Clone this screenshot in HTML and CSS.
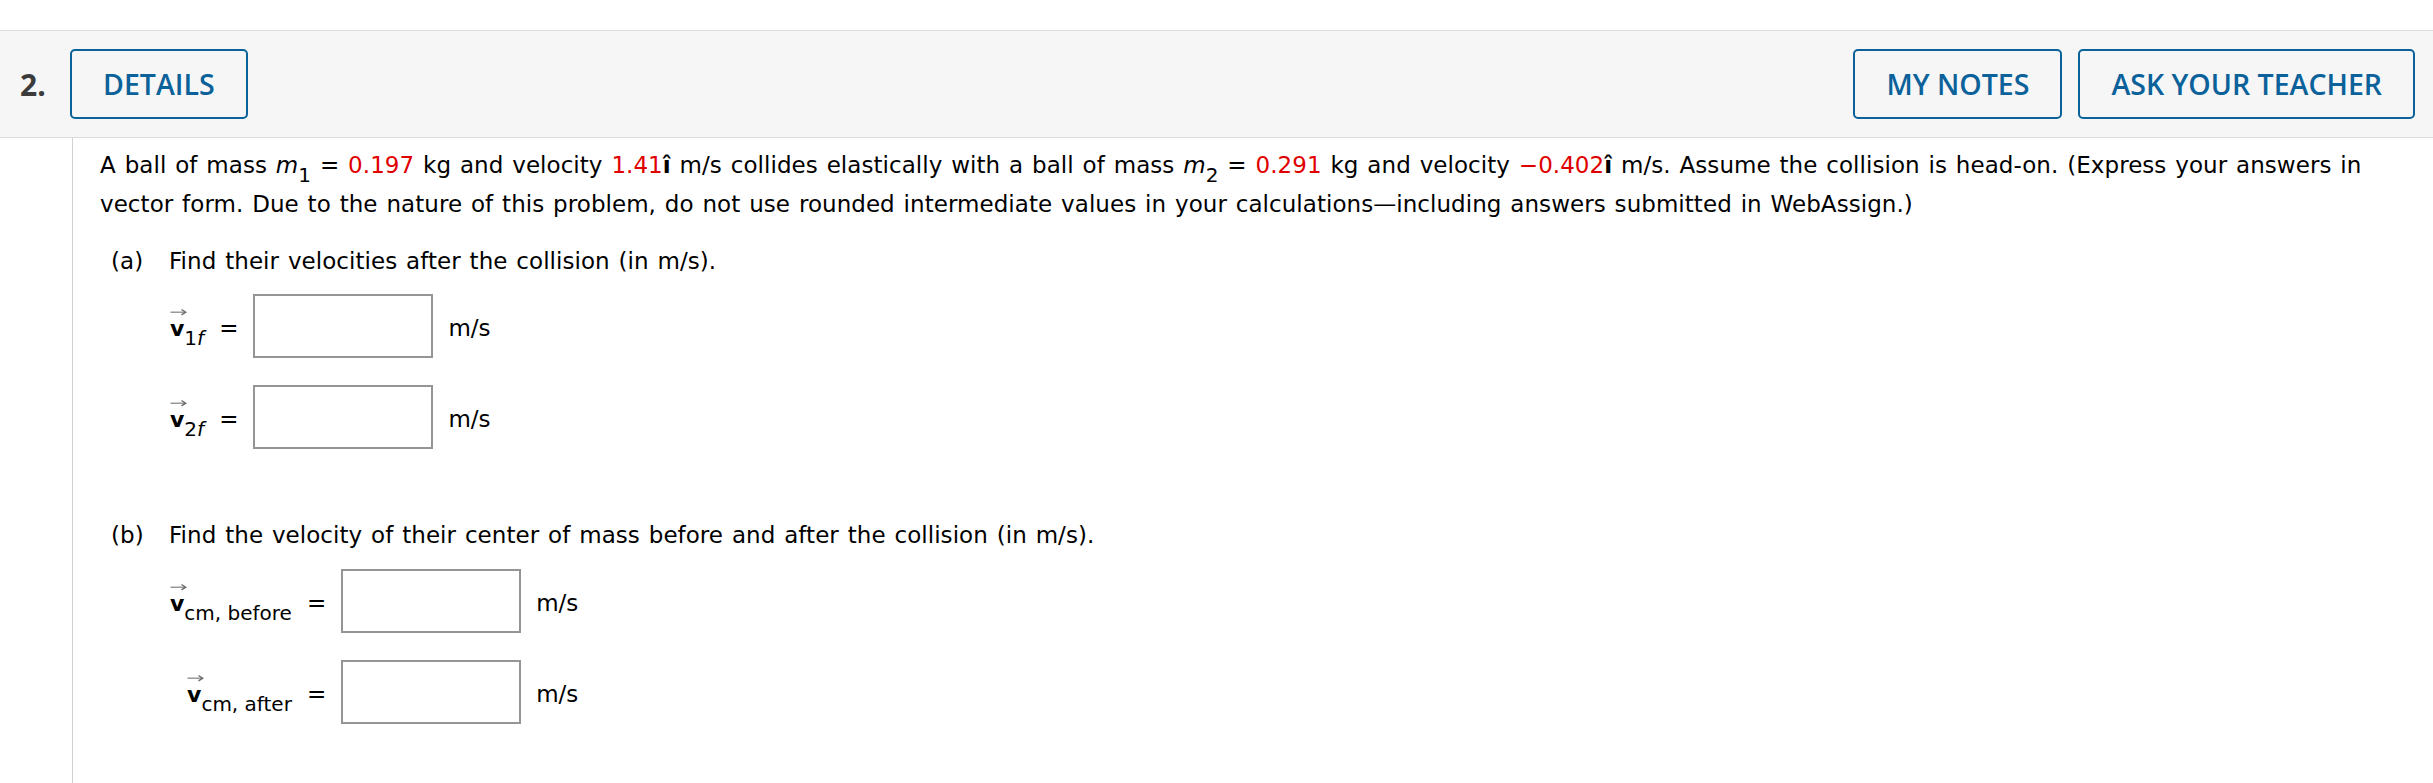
FILE: index.html
```html
<!DOCTYPE html>
<html lang="en">
<head>
<meta charset="utf-8">
<title>Question 2</title>
<link rel="stylesheet" href="styles.css">
</head>
<body>
<div class="question">
  <div class="qhead">
    <span class="qnum">2.</span>
    <button class="btn" type="button">DETAILS</button>
    <button class="btn btn-notes" type="button">MY NOTES</button>
    <button class="btn btn-ask" type="button">ASK YOUR TEACHER</button>
  </div>
  <div class="qbody">
    <p class="stem">A ball of mass <i>m</i><span class="sub">1</span> = <span class="red">0.197</span> kg and velocity <span class="red">1.41</span><b>î</b> m/s collides elastically with a ball of mass <i>m</i><span class="sub">2</span> = <span class="red">0.291</span> kg and velocity <span class="red">−0.402</span><b>î</b> m/s. Assume the collision is head-on. (Express your answers in vector form. Due to the nature of this problem, do not use rounded intermediate values in your calculations—including answers submitted in WebAssign.)</p>

    <div class="part">
      <div class="part-head"><span class="plabel">(a)</span><span>Find their velocities after the collision (in m/s).</span></div>
      <div class="answers">
        <span class="cell lbl"><span class="vec">v<svg class="arr" viewBox="0 0 17 8"><path d="M0.5 4.2H15" stroke="#8a8a8a" stroke-width="1.3" fill="none"/><path d="M11.5 1.5L15.8 4.2L11.5 6.9" stroke="#6a6a6a" stroke-width="1.4" fill="none"/></svg></span><span class="sub">1<i>f</i></span></span>
        <span class="cell eq">=</span>
        <input class="ans" type="text" aria-label="v1f">
        <span class="cell unit">m/s</span>

        <span class="cell lbl"><span class="vec">v<svg class="arr" viewBox="0 0 17 8"><path d="M0.5 4.2H15" stroke="#8a8a8a" stroke-width="1.3" fill="none"/><path d="M11.5 1.5L15.8 4.2L11.5 6.9" stroke="#6a6a6a" stroke-width="1.4" fill="none"/></svg></span><span class="sub">2<i>f</i></span></span>
        <span class="cell eq">=</span>
        <input class="ans" type="text" aria-label="v2f">
        <span class="cell unit">m/s</span>
      </div>
    </div>

    <div class="part">
      <div class="part-head"><span class="plabel">(b)</span><span>Find the velocity of their center of mass before and after the collision (in m/s).</span></div>
      <div class="answers">
        <span class="cell lbl"><span class="vec">v<svg class="arr" viewBox="0 0 17 8"><path d="M0.5 4.2H15" stroke="#8a8a8a" stroke-width="1.3" fill="none"/><path d="M11.5 1.5L15.8 4.2L11.5 6.9" stroke="#6a6a6a" stroke-width="1.4" fill="none"/></svg></span><span class="sub">cm, before</span></span>
        <span class="cell eq">=</span>
        <input class="ans" type="text" aria-label="vcm before">
        <span class="cell unit">m/s</span>

        <span class="cell lbl"><span class="vec">v<svg class="arr" viewBox="0 0 17 8"><path d="M0.5 4.2H15" stroke="#8a8a8a" stroke-width="1.3" fill="none"/><path d="M11.5 1.5L15.8 4.2L11.5 6.9" stroke="#6a6a6a" stroke-width="1.4" fill="none"/></svg></span><span class="sub">cm, after</span></span>
        <span class="cell eq">=</span>
        <input class="ans" type="text" aria-label="vcm after">
        <span class="cell unit">m/s</span>
      </div>
    </div>
  </div>
</div>
</body>
</html>
```

FILE: styles.css
```css
* {
  box-sizing: border-box;
}

html,
body {
  margin: 0;
  background: #ffffff;
}

body {
  font-family: "DejaVu Sans", Verdana, sans-serif;
  color: #000000;
}

.question {
  padding-top: 30px;
}

/* header band */
.qhead {
  display: flex;
  align-items: center;
  background: #f6f6f6;
  border-top: 1px solid #dcdcdc;
  border-bottom: 1px solid #dcdcdc;
  padding: 18px 18px 18px 20px;
}

.qnum {
  width: 50px;
  font-family: "Open Sans", "DejaVu Sans", sans-serif;
  font-weight: 700;
  font-size: 30px;
  color: #3b3b3b;
}

.btn {
  height: 70px;
  padding: 0 31px;
  background: transparent;
  border: 2px solid #0b629a;
  border-radius: 5px;
  color: #0b629a;
  font-family: "Open Sans", "DejaVu Sans", sans-serif;
  font-weight: 600;
  font-size: 28.5px;
  line-height: 1;
  white-space: nowrap;
}

.btn-notes {
  margin-left: auto;
}

.btn-ask {
  margin-left: 16px;
}

/* body */
.qbody {
  margin-left: 72px;
  border-left: 1px solid #d2d2d2;
  padding: 8px 40px 0 27px;
  min-height: calc(100vh - 138px);
  font-size: 23px;
  line-height: 39.4px;
  word-spacing: 1.5px;
  letter-spacing: 0.05px;
}

.stem {
  margin: 0;
}

.red {
  color: #e00000;
}

.sub {
  font-size: 20px;
  line-height: 0;
  vertical-align: -9px;
  font-weight: 400;
  word-spacing: 0;
  letter-spacing: 0;
}

.part {
  margin-top: 17px;
}

.part + .part {
  margin-top: 64px;
}

.part-head {
  display: flex;
}

.plabel {
  margin-left: 11px;
  width: 58px;
}

.answers {
  display: grid;
  grid-template-columns: repeat(4, max-content);
  column-gap: 15px;
  row-gap: 24px;
  margin: 13px 0 0 70px;
  align-items: start;
}

.cell {
  line-height: 64px;
  padding-top: 2px;
  white-space: nowrap;
  letter-spacing: 0;
}

.lbl {
  justify-self: end;
}

.vec {
  position: relative;
  font-weight: 700;
  font-size: 22px;
}

.arr {
  position: absolute;
  left: 0;
  top: -8px;
  width: 17px;
  height: 8px;
}

.ans {
  width: 180px;
  height: 64px;
  margin: 0;
  padding: 0 6px;
  border: 2px solid #959595;
  border-radius: 0;
  background: #ffffff;
  font-family: inherit;
  font-size: 23px;
}
```
